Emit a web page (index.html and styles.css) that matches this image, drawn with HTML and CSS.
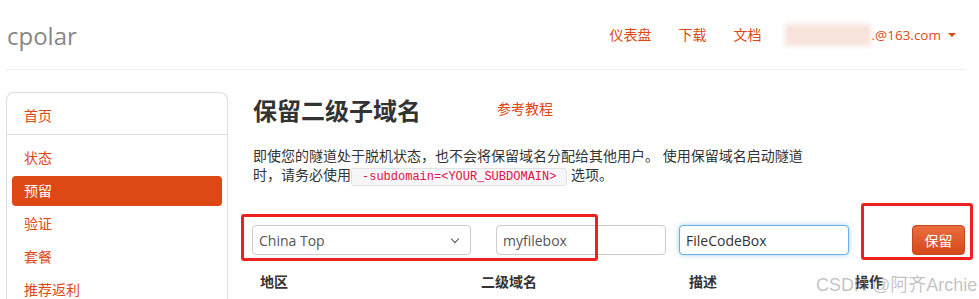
FILE: index.html
```html
<!DOCTYPE html>
<html lang="zh">
<head>
  <meta charset="UTF-8">
  <title>cpolar – 保留二级子域名</title>
  <link rel="stylesheet" href="styles.css">
</head>
<body>

<!-- top bar -->
<div class="header">
  <div class="brand">cpolar</div>
  <div class="nav">
    <a href="#">仪表盘</a>
    <a href="#">下载</a>
    <a href="#">文档</a>
    <a href="#" class="user"><span class="blur"></span>.@163.com <span class="caret"></span></a>
  </div>
</div>

<div class="page">
  <!-- side menu -->
  <div class="sidebar">
    <a href="#" class="item">首页</a>
    <div class="divider"></div>
    <a href="#" class="item">状态</a>
    <a href="#" class="item active">预留</a>
    <a href="#" class="item">验证</a>
    <a href="#" class="item">套餐</a>
    <a href="#" class="item">推荐返利</a>
  </div>

  <!-- main content -->
  <div class="main">
    <div class="title-row">
      <h2>保留二级子域名</h2>
      <a href="#" class="help">参考教程</a>
    </div>
    <p class="intro">即使您的隧道处于脱机状态，也不会将保留域名分配给其他用户。 使用保留域名启动隧道时，请务必使用<code>-subdomain=&lt;YOUR_SUBDOMAIN&gt;</code> 选项。</p>

    <div class="form-row">
      <div class="select">China Top <span class="chev"></span></div>
      <input type="text" class="field f-name" value="myfilebox">
      <input type="text" class="field f-desc focus" value="FileCodeBox">
      <button class="btn">保留</button>
    </div>

    <div class="thead">
      <div class="c1">地区</div>
      <div class="c2">二级域名</div>
      <div class="c3">描述</div>
      <div class="c4">操作</div>
    </div>
  </div>
</div>

<!-- screenshot annotations -->
<div class="mark mark-a"></div>
<div class="mark mark-b"></div>
<div class="watermark">CSDN @阿齐Archie</div>

</body>
</html>
```

FILE: styles.css
```css
body { margin: 0; background: #fff; font-family: "Open Sans", "Noto Sans CJK SC", sans-serif; font-size: 14px; color: #333; }
a { color: #dd4814; text-decoration: none; }

.header { display: flex; justify-content: space-between; align-items: center; height: 70px; margin: 0 14px 0 6px; border-bottom: 1px solid #eee; box-sizing: border-box; }
.brand { font-size: 24px; color: #888; padding-left: 1px; margin-top: 2px; }
.nav { display: flex; align-items: center; gap: 27px; padding-right: 9px; }
.nav a { line-height: 20px; }
.user { display: flex; align-items: center; margin-left: -4px; font-size: 13.5px; }
.blur { display: inline-block; width: 86px; height: 22px; background: #f6ddd4; filter: blur(2px); opacity: .8; margin-right: 1px; }
.caret { display: inline-block; margin-left: 7px; border-left: 4px solid transparent; border-right: 4px solid transparent; border-top: 4px solid #dd4814; }

.page { display: flex; gap: 25px; margin: 22px 0 0 6px; }
.sidebar { width: 222px; box-sizing: border-box; border: 1px solid #ddd; border-bottom: none; border-radius: 8px 8px 0 0; padding: 8px 5px 0; height: 210px; }
.sidebar .item { display: block; height: 30px; line-height: 30px; padding-left: 12px; margin-bottom: 3px; border-radius: 4px; }
.sidebar .item.active { background: #dd4814; color: #fff; }
.sidebar .divider { height: 1px; background: #ddd; margin: 2px -5px 8px; }

.main { width: 713px; }
.title-row { display: flex; align-items: flex-start; }
h2 { margin: 4px 0 0; font-size: 24px; line-height: 30px; font-weight: bold; color: #333; }
.help { margin: 6px 0 0 76px; }
.intro { width: 555px; margin: 20px 0 0; line-height: 19px; }
code { font-family: "Liberation Mono", monospace; font-size: 12px; color: #dd1144; background: #f7f7f9; border: 1px solid #e1e1e8; border-radius: 3px; padding: 1px 10px; }

.form-row { display: flex; align-items: center; margin-top: 38px; margin-left: -1px; }
.select, .field { height: 30px; box-sizing: border-box; border: 1px solid #ccc; border-radius: 4px; font-family: inherit; font-size: 14px; color: #555; padding: 0 6px; background: #fff; }
.select { width: 219px; display: flex; align-items: center; justify-content: space-between; padding-right: 12px; }
.chev { width: 5px; height: 5px; border-right: 1.5px solid #555; border-bottom: 1.5px solid #555; transform: rotate(45deg); margin-top: -3px; }
.field { width: 170px; outline: none; }
.f-name { margin-left: 25px; }
.f-desc { margin-left: 13px; }
.field.focus { border-color: #66afe9; box-shadow: 0 0 5px rgba(102, 175, 233, .6); color: #333; }
.btn { margin-left: 63px; width: 53px; height: 30px; border: 1px solid #c8441a; border-radius: 4px; background: linear-gradient(#ea6e3e, #d5481b); color: #fff; font-family: inherit; font-size: 14px; }

.thead { display: flex; font-weight: bold; margin-top: 17px; margin-left: -1px; line-height: 20px; }
.thead div { padding-left: 8px; box-sizing: border-box; }
.c1 { width: 221px; }
.c2 { width: 208px; }
.c3 { width: 166px; }

.mark { position: absolute; border: 3px solid #f02020; border-radius: 3px; box-sizing: border-box; }
.mark-a { left: 241px; top: 214px; width: 357px; height: 47px; }
.mark-b { left: 861px; top: 203px; width: 112px; height: 57px; }
.watermark { position: absolute; left: 816px; top: 270px; font-family: "Liberation Sans", "Noto Sans CJK SC", sans-serif; font-size: 18px; color: rgba(120, 120, 120, .45); }
```
